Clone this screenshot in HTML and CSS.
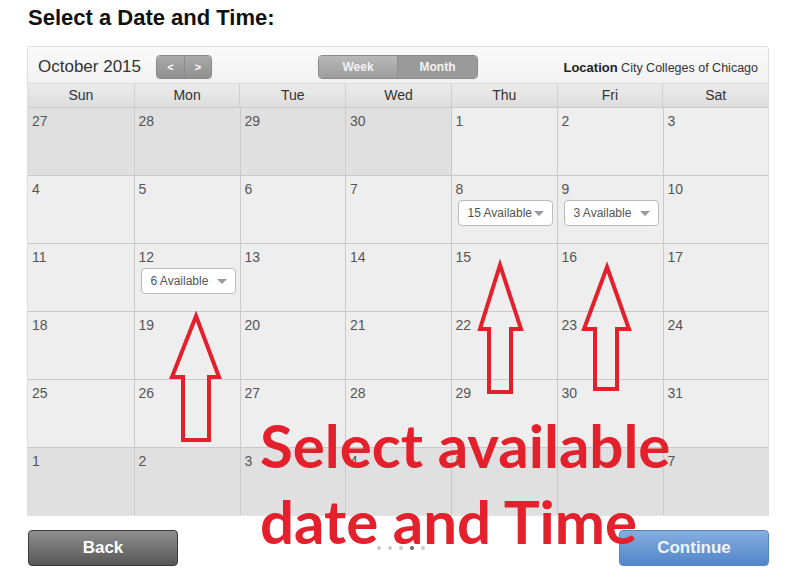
FILE: index.html
```html
<!DOCTYPE html>
<html lang="en">
<head>
    <meta charset="UTF-8">
    <title>Select a Date and Time</title>
    <link rel="stylesheet" href="styles.css">
</head>
<body>
<div class="page">
    <h1 class="title">Select a Date and Time:</h1>
    <div class="calendar">
        <div class="toolbar">
            <div class="toolbarLeft">
                <span class="monthName">October 2015</span>
                <div class="navGroup">
                    <span class="navButton">&lt;</span>
                    <span class="navButton">&gt;</span>
                </div>
            </div>
            <div class="viewGroup">
                <span class="viewButton">Week</span>
                <span class="viewButton active">Month</span>
            </div>
            <div class="location"><b>Location</b> City Colleges of Chicago</div>
        </div>
        <div class="dayNames">
            <div>Sun</div><div>Mon</div><div>Tue</div><div>Wed</div><div>Thu</div><div>Fri</div><div>Sat</div>
        </div>
        <div class="days">
            <div class="day other">27</div>
            <div class="day other">28</div>
            <div class="day other">29</div>
            <div class="day other">30</div>
            <div class="day">1</div>
            <div class="day">2</div>
            <div class="day">3</div>

            <div class="day">4</div>
            <div class="day">5</div>
            <div class="day">6</div>
            <div class="day">7</div>
            <div class="day">8<div class="slots">15 Available</div></div>
            <div class="day">9<div class="slots">3 Available</div></div>
            <div class="day">10</div>

            <div class="day">11</div>
            <div class="day">12<div class="slots">6 Available</div></div>
            <div class="day">13</div>
            <div class="day">14</div>
            <div class="day">15</div>
            <div class="day">16</div>
            <div class="day">17</div>

            <div class="day">18</div>
            <div class="day">19</div>
            <div class="day">20</div>
            <div class="day">21</div>
            <div class="day">22</div>
            <div class="day">23</div>
            <div class="day">24</div>

            <div class="day">25</div>
            <div class="day">26</div>
            <div class="day">27</div>
            <div class="day">28</div>
            <div class="day">29</div>
            <div class="day">30</div>
            <div class="day">31</div>

            <div class="day other">1</div>
            <div class="day other">2</div>
            <div class="day other">3</div>
            <div class="day other">4</div>
            <div class="day other">5</div>
            <div class="day other">6</div>
            <div class="day other">7</div>
        </div>
    </div>
    <div class="footer">
        <span class="bigButton back">Back</span>
        <div class="dots">
            <i></i><i></i><i></i><i class="on"></i><i></i>
        </div>
        <span class="bigButton continue">Continue</span>
    </div>
</div>

<!-- annotation drawn over the screenshot -->
<svg class="arrows" width="792" height="586" viewBox="0 0 792 586">
    <path d="M196 316 L219 377 L209 377 L209 440 L183 440 L183 377 L172 377 Z"/>
    <path d="M500 265 L521 329 L511 329 L511 392 L489 392 L489 329 L480 329 Z"/>
    <path d="M607 267 L629 329 L617 329 L617 389 L595 389 L595 329 L584 329 Z"/>
</svg>
<div class="note">Select available<br>date and Time</div>
</body>
</html>
```

FILE: styles.css
```css
*{
    margin: 0;
    padding: 0;
    box-sizing: border-box;
}
body{
    font-family: "Liberation Sans", Arial, sans-serif;
    background: #FFFFFF;
    color: #333333;
    position: relative;
    width: 792px;
    height: 586px;
    overflow: hidden;
}
.page{
    padding: 6px 23px 0 27px;
}
.title{
    font-size: 22px;
    font-weight: bold;
    color: #111111;
    padding-left: 1px;
    line-height: 24px;
    margin-bottom: 16px;
}
.calendar{
    width: 742px;
    border: 1px solid #dddddd;
    border-radius: 4px 4px 0 0;
    border-bottom-color: #e4e4e4;
    overflow: hidden;
}
.toolbar{
    height: 36px;
    display: flex;
    align-items: center;
    justify-content: space-between;
    background: linear-gradient(#fafafa, #f2f2f2);
    padding: 4px 10px 0 10px;
}
.toolbarLeft{
    display: flex;
    align-items: center;
    width: 260px;
}
.monthName{
    font-size: 17px;
    color: #333333;
    margin-right: 15px;
}
.navGroup, .viewGroup{
    display: flex;
    height: 24px;
    border: 1px solid #8a8a8a;
    border-radius: 4px;
    overflow: hidden;
}
.navButton{
    width: 27px;
    line-height: 22px;
    text-align: center;
    color: #FFFFFF;
    font-size: 11px;
    font-weight: bold;
    background: linear-gradient(#a9a9a9, #909090);
}
.navButton + .navButton{
    border-left: 1px solid #8a8a8a;
}
.viewButton{
    width: 78px;
    line-height: 22px;
    text-align: center;
    color: #f2f2f2;
    font-size: 12px;
    font-weight: bold;
    background: linear-gradient(#b9b9b9, #9c9c9c);
}
.viewButton.active{
    width: 80px;
    background: #9a9a9a;
    border-left: 1px solid #909090;
}
.location{
    width: 260px;
    text-align: right;
    font-size: 12.5px;
    color: #333333;
}
.location b{
    font-size: 13px;
    color: #222222;
}
.dayNames{
    display: grid;
    grid-template-columns: repeat(7, 1fr);
    height: 24px;
    background: linear-gradient(#ececec, #dddddd);
    border-top: 1px solid #dddddd;
}
.dayNames div{
    text-align: center;
    font-size: 14px;
    line-height: 23px;
    color: #333333;
    border-left: 1px solid #d0d0d0;
}
.dayNames div:first-child{
    border-left: none;
}
.days{
    display: grid;
    grid-template-columns: repeat(7, 1fr);
    grid-auto-rows: 68px;
}
.day{
    background: #eeeeee;
    border-left: 1px solid #c9c9c9;
    border-top: 1px solid #c9c9c9;
    font-size: 14px;
    color: #555555;
    line-height: 18px;
    padding: 4px 4px 0 4px;
}
.day:nth-child(7n+1){
    border-left: none;
}
.day.other{
    background: #e0e0e0;
}
.slots{
    position: relative;
    width: 95px;
    height: 26px;
    margin: 2px 0 0 2px;
    background: #FFFFFF;
    border: 1px solid #bbbbbb;
    border-radius: 4px;
    font-size: 12px;
    line-height: 24px;
    padding-left: 9px;
    color: #555555;
}
.slots:after{
    content: "";
    position: absolute;
    right: 8px;
    top: 10px;
    border-left: 5px solid transparent;
    border-right: 5px solid transparent;
    border-top: 5px solid #999999;
}
.footer{
    display: flex;
    align-items: center;
    justify-content: space-between;
    margin-top: 14px;
    padding-left: 1px;
    width: 742px;
}
.bigButton{
    width: 150px;
    height: 36px;
    border-radius: 4px;
    text-align: center;
    line-height: 34px;
    font-size: 17px;
    font-weight: bold;
    color: #FFFFFF;
}
.back{
    background: linear-gradient(#8f8f8f, #565656);
    border: 1px solid #3a3a3a;
}
.continue{
    background: linear-gradient(#86aee0, #5285c9);
    border: 1px solid #5a86c0;
    color: #eef4fb;
}
.dots{
    display: flex;
    gap: 7px;
    margin-left: 4px;
}
.dots i{
    width: 4px;
    height: 4px;
    border-radius: 50%;
    background: #cccccc;
}
.dots i.on{
    background: #666666;
}
.arrows{
    position: absolute;
    left: 0;
    top: 0;
    pointer-events: none;
}
.arrows path{
    fill: none;
    stroke: #e3202b;
    stroke-width: 4;
    stroke-linejoin: miter;
}
.note{
    position: absolute;
    left: 260px;
    top: 407px;
    font-family: Lato, "Open Sans", sans-serif;
    font-weight: bold;
    font-size: 60px;
    line-height: 76px;
    color: #e3202b;
    pointer-events: none;
}
```
